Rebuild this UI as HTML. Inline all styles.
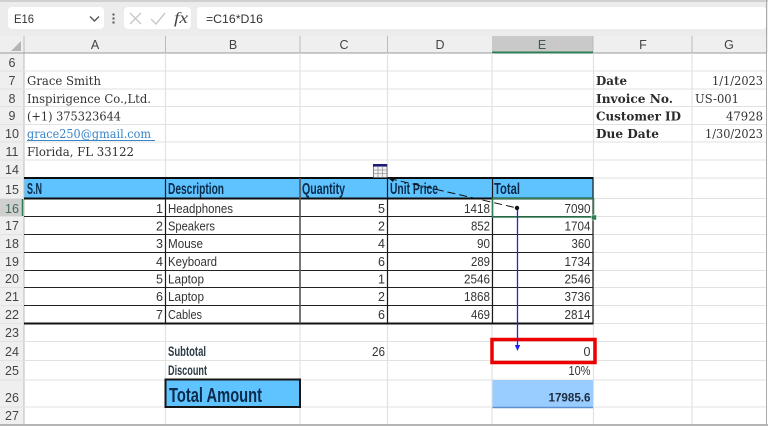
<!DOCTYPE html>
<html><head><meta charset="utf-8"><style>
html,body{margin:0;padding:0;background:#fff;width:768px;height:426px;overflow:hidden}
svg{display:block}
.h{font:12.5px "Liberation Sans",sans-serif;fill:#444;text-anchor:middle}
.s{font:12px "DejaVu Serif",serif;fill:#333}
.sb{font:bold 12px "DejaVu Serif",serif;fill:#2a2a2a}
.d{font:12.5px "Liberation Sans",sans-serif;fill:#333}
.r{font:12.5px "Liberation Sans",sans-serif;fill:#333;text-anchor:end}
.t{font:bold 15.5px "Liberation Sans Narrow","Liberation Sans",sans-serif;fill:#0b2b4a}
.n{font:bold 14px "Liberation Sans Narrow","Liberation Sans",sans-serif;fill:#2b3a44}
</style></head><body>
<svg width="768" height="426" viewBox="0 0 768 426" xmlns="http://www.w3.org/2000/svg">
<rect width="768" height="426" fill="#fff"/>
<!-- toolbar -->
<rect width="768" height="36" fill="#ececec"/>
<rect width="768" height="2" fill="#d0d0d0"/>
<rect x="8" y="7" width="96" height="22" rx="4" fill="#fff"/>
<rect x="124" y="7" width="67" height="22" rx="4" fill="#fff"/>
<rect x="197" y="7" width="569" height="22" rx="3" fill="#fff"/>
<text x="14" y="23" font-family="Liberation Sans" font-size="12" fill="#333" textLength="20" lengthAdjust="spacingAndGlyphs">E16</text>
<path d="M90 16.500l4.500 4.500 4.500-4.500" fill="none" stroke="#555" stroke-width="1.400"/>
<rect x="112.500" y="13.500" width="2" height="2" fill="#555"/><rect x="112.500" y="17.500" width="2" height="2" fill="#555"/><rect x="112.500" y="21.500" width="2" height="2" fill="#555"/>
<path d="M130 13l11 11M141 13l-11 11" stroke="#c8c8c8" stroke-width="1.400" fill="none"/>
<path d="M151 19l5 5 9-11" stroke="#c8c8c8" stroke-width="1.400" fill="none"/>
<text x="174" y="23" font-family="Liberation Serif" font-style="italic" font-size="16" fill="#444" textLength="14" lengthAdjust="spacingAndGlyphs">fx</text>
<text x="206" y="23" font-family="Liberation Sans" font-size="12" fill="#333" textLength="57" lengthAdjust="spacingAndGlyphs">=C16*D16</text>
<!-- headers -->
<rect y="36" width="768" height="17" fill="#efefef"/>
<rect x="0" y="53" width="24" height="371" fill="#efefef"/>
<rect x="492" y="36" width="101" height="17" fill="#c9c9c9"/>
<rect x="0" y="198" width="23" height="19" fill="#cfcfcf"/>
<path d="M21 41v10H11z" fill="#b5b5b5"/>
<path d="M24 36V424M165.500 36V53M300 36V53M387.500 36V53M593 36V53M692 36V53" stroke="#bbb" stroke-width="1" fill="none"/>
<path d="M0 53H492M593 53H766" stroke="#9a9a9a" stroke-width="1"/>
<path d="M492 52.500H593" stroke="#2f7d52" stroke-width="2"/>
<path d="M22.500 198V217" stroke="#2f7d52" stroke-width="1.500"/>
<text class="h" x="95" y="49">A</text><text class="h" x="233" y="49">B</text><text class="h" x="344" y="49">C</text><text class="h" x="440" y="49">D</text><text class="h" x="542" y="49" style="fill:#3f5c4c">E</text><text class="h" x="643" y="49">F</text><text class="h" x="729" y="49">G</text>
<g>
<text class="h" x="12" y="67">6</text><text class="h" x="12" y="85">7</text><text class="h" x="12" y="103">8</text><text class="h" x="12" y="120">9</text><text class="h" x="12" y="138">10</text><text class="h" x="12" y="156">11</text><text class="h" x="12" y="174">14</text><text class="h" x="12" y="194">15</text><text class="h" x="12" y="213" style="fill:#3f6b52">16</text><text class="h" x="12" y="230">17</text><text class="h" x="12" y="248">18</text><text class="h" x="12" y="266">19</text><text class="h" x="12" y="283">20</text><text class="h" x="12" y="301">21</text><text class="h" x="12" y="319">22</text><text class="h" x="12" y="337">23</text><text class="h" x="12" y="356">24</text><text class="h" x="12" y="375">25</text><text class="h" x="12" y="402">26</text><text class="h" x="12" y="420">27</text>
</g>
<!-- gridlines -->
<path d="M0 71H766M0 89H766M0 106.500H766M0 124.500H766M0 142H766M0 160H766M0 178H766M0 198.500H766M0 216.500H766M0 234.500H766M0 252.500H766M0 270.500H766M0 287.500H766M0 305.500H766M0 323.500H766M0 341.500H766M0 360.500H766M0 380H766M0 407H766" stroke="#e2e2e2" stroke-width="1" fill="none"/>
<path d="M165.500 53V424M300 53V424M387.500 53V424M492 53V424M593.500 53V424M692 53V424" stroke="#e2e2e2" stroke-width="1.200" fill="none"/>
<path d="M766.500 0V424" stroke="#aaa" stroke-width="1"/>
<rect y="424" width="768" height="2" fill="#b5b5b5"/>
<!-- invoice text -->
<text class="s" x="27" y="85" textLength="74" lengthAdjust="spacingAndGlyphs">Grace Smith</text>
<text class="s" x="27" y="103" textLength="124" lengthAdjust="spacingAndGlyphs">Inspirigence Co.,Ltd.</text>
<text class="s" x="27" y="120.500" textLength="94" lengthAdjust="spacingAndGlyphs">(+1) 375323644</text>
<text class="s" x="27" y="138" textLength="124" lengthAdjust="spacingAndGlyphs" style="fill:#3a85c8">grace250@gmail.com</text>
<path d="M27 140.500H155" stroke="#3a85c8" stroke-width="1"/>
<text class="s" x="27" y="156" textLength="107" lengthAdjust="spacingAndGlyphs">Florida, FL 33122</text>
<text class="sb" x="596" y="85" textLength="31" lengthAdjust="spacingAndGlyphs">Date</text>
<text class="sb" x="596" y="103" textLength="77" lengthAdjust="spacingAndGlyphs">Invoice No.</text>
<text class="sb" x="596" y="120.500" textLength="85" lengthAdjust="spacingAndGlyphs">Customer ID</text>
<text class="sb" x="596" y="138" textLength="63" lengthAdjust="spacingAndGlyphs">Due Date</text>
<text class="s" x="712" y="85" textLength="51" lengthAdjust="spacingAndGlyphs">1/1/2023</text>
<text class="s" x="695" y="103" textLength="44" lengthAdjust="spacingAndGlyphs">US-001</text>
<text class="s" x="726" y="120.500" textLength="37" lengthAdjust="spacingAndGlyphs">47928</text>
<text class="s" x="705" y="138" textLength="58" lengthAdjust="spacingAndGlyphs">1/30/2023</text>
<!-- table -->
<rect x="24.500" y="178" width="568.500" height="20" fill="#5fc3ff"/>
<path d="M24 178H593.500M24 198.500H593" stroke="#0c0c0c" stroke-width="2" fill="none"/>
<path d="M24 216.500H593M24 234.500H593M24 252.500H593M24 270.500H593M24 287.500H593M24 305.500H593" stroke="#222" stroke-width="1" fill="none"/>
<path d="M24 323.500H593.500" stroke="#111" stroke-width="2"/>
<path d="M165.500 178V323.500M387.500 178V323.500M492.500 178V323.500M593 178V324" stroke="#1a1a1a" stroke-width="1.200" fill="none"/>
<path d="M300 178V323.500" stroke="#555" stroke-width="1.600"/>
<text class="t" x="27" y="194" textLength="15" lengthAdjust="spacingAndGlyphs">S.N</text>
<text class="t" x="168" y="194" textLength="56" lengthAdjust="spacingAndGlyphs">Description</text>
<text class="t" x="302" y="194" textLength="43" lengthAdjust="spacingAndGlyphs">Quantity</text>
<text class="t" x="390" y="194" textLength="48" lengthAdjust="spacingAndGlyphs">Unit Price</text>
<text class="t" x="494" y="194" textLength="26" lengthAdjust="spacingAndGlyphs">Total</text>
<g>
<text class="r" x="163" y="213">1</text><text class="r" x="163" y="230.500">2</text><text class="r" x="163" y="248">3</text><text class="r" x="163" y="266">4</text><text class="r" x="163" y="283.500">5</text><text class="r" x="163" y="301">6</text><text class="r" x="163" y="319">7</text>
<text class="d" x="168" y="213" textLength="65" lengthAdjust="spacingAndGlyphs">Headphones</text>
<text class="d" x="168" y="230.500" textLength="47" lengthAdjust="spacingAndGlyphs">Speakers</text>
<text class="d" x="168" y="248" textLength="35" lengthAdjust="spacingAndGlyphs">Mouse</text>
<text class="d" x="168" y="266" textLength="49" lengthAdjust="spacingAndGlyphs">Keyboard</text>
<text class="d" x="168" y="283.500" textLength="36" lengthAdjust="spacingAndGlyphs">Laptop</text>
<text class="d" x="168" y="301" textLength="36" lengthAdjust="spacingAndGlyphs">Laptop</text>
<text class="d" x="168" y="319" textLength="34" lengthAdjust="spacingAndGlyphs">Cables</text>
<text class="r" x="385" y="213">5</text><text class="r" x="385" y="230.500">2</text><text class="r" x="385" y="248">4</text><text class="r" x="385" y="266">6</text><text class="r" x="385" y="283.500">1</text><text class="r" x="385" y="301">2</text><text class="r" x="385" y="319">6</text>
<text class="r" x="490" y="213" textLength="26" lengthAdjust="spacingAndGlyphs">1418</text><text class="r" x="490" y="230.500" textLength="19" lengthAdjust="spacingAndGlyphs">852</text><text class="r" x="490" y="248" textLength="13" lengthAdjust="spacingAndGlyphs">90</text><text class="r" x="490" y="266" textLength="19" lengthAdjust="spacingAndGlyphs">289</text><text class="r" x="490" y="283.500" textLength="26" lengthAdjust="spacingAndGlyphs">2546</text><text class="r" x="490" y="301" textLength="26" lengthAdjust="spacingAndGlyphs">1868</text><text class="r" x="490" y="319" textLength="19" lengthAdjust="spacingAndGlyphs">469</text>
<text class="r" x="590.500" y="213" textLength="26" lengthAdjust="spacingAndGlyphs">7090</text><text class="r" x="590.500" y="230.500" textLength="26" lengthAdjust="spacingAndGlyphs">1704</text><text class="r" x="590.500" y="248" textLength="19" lengthAdjust="spacingAndGlyphs">360</text><text class="r" x="590.500" y="266" textLength="26" lengthAdjust="spacingAndGlyphs">1734</text><text class="r" x="590.500" y="283.500" textLength="26" lengthAdjust="spacingAndGlyphs">2546</text><text class="r" x="590.500" y="301" textLength="26" lengthAdjust="spacingAndGlyphs">3736</text><text class="r" x="590.500" y="319" textLength="26" lengthAdjust="spacingAndGlyphs">2814</text>
</g>
<!-- selection -->
<rect x="492.500" y="198.500" width="101" height="18.500" fill="none" stroke="#2f7d52" stroke-width="1.500"/>
<rect x="591.500" y="215" width="5" height="5" fill="#2f7d52" stroke="#fff" stroke-width="0.500"/>
<!-- totals -->
<text class="n" x="168" y="356" textLength="38" lengthAdjust="spacingAndGlyphs">Subtotal</text>
<text class="n" x="168" y="375" textLength="39" lengthAdjust="spacingAndGlyphs">Discount</text>
<text class="r" x="385" y="356" textLength="13" lengthAdjust="spacingAndGlyphs">26</text>
<text class="r" x="590.500" y="356">0</text>
<text class="r" x="590.500" y="375" textLength="22" lengthAdjust="spacingAndGlyphs">10%</text>
<rect x="165.500" y="379.500" width="134.500" height="27.500" fill="#5fc3ff" stroke="#151515" stroke-width="2"/>
<text x="169" y="402" font-family="Liberation Sans, sans-serif" font-weight="bold" font-size="20" fill="#0b2b4a" textLength="93" lengthAdjust="spacingAndGlyphs">Total Amount</text>
<rect x="492.500" y="380" width="100.500" height="27" fill="#99ccff"/>
<path d="M492.500 407.500H593" stroke="#5e8fd0" stroke-width="1.500"/>
<text x="590.500" y="401.500" text-anchor="end" font-family="Liberation Sans" font-weight="bold" font-size="12" fill="#1c2c40" textLength="42" lengthAdjust="spacingAndGlyphs">17985.6</text>
<rect x="492" y="339.500" width="103" height="23" fill="none" stroke="#ee0000" stroke-width="3.500"/>
<!-- arrows -->
<path d="M517.500 208V346" stroke="#2020f0" stroke-width="1.300"/>
<path d="M514.800 345H520.200L517.500 351z" fill="#2020f0"/>
<path d="M389 178.500L517 208" stroke="#111" stroke-width="1" stroke-dasharray="8 4" fill="none"/>
<path d="M388 178L395 177.500 393 182z" fill="#111"/>
<circle cx="517" cy="208" r="2.200" fill="#111"/>
<!-- table icon -->
<rect x="373.500" y="164.500" width="13.500" height="13" fill="#f4f4f4" stroke="#666" stroke-width="0.800"/>
<rect x="373" y="164" width="14" height="2.600" fill="#1c1c78"/>
<path d="M378 167V177.500M382.500 167V177.500M374 170H387M374 173.500H387" stroke="#999" stroke-width="0.800" fill="none"/>
</svg>
</body></html>
